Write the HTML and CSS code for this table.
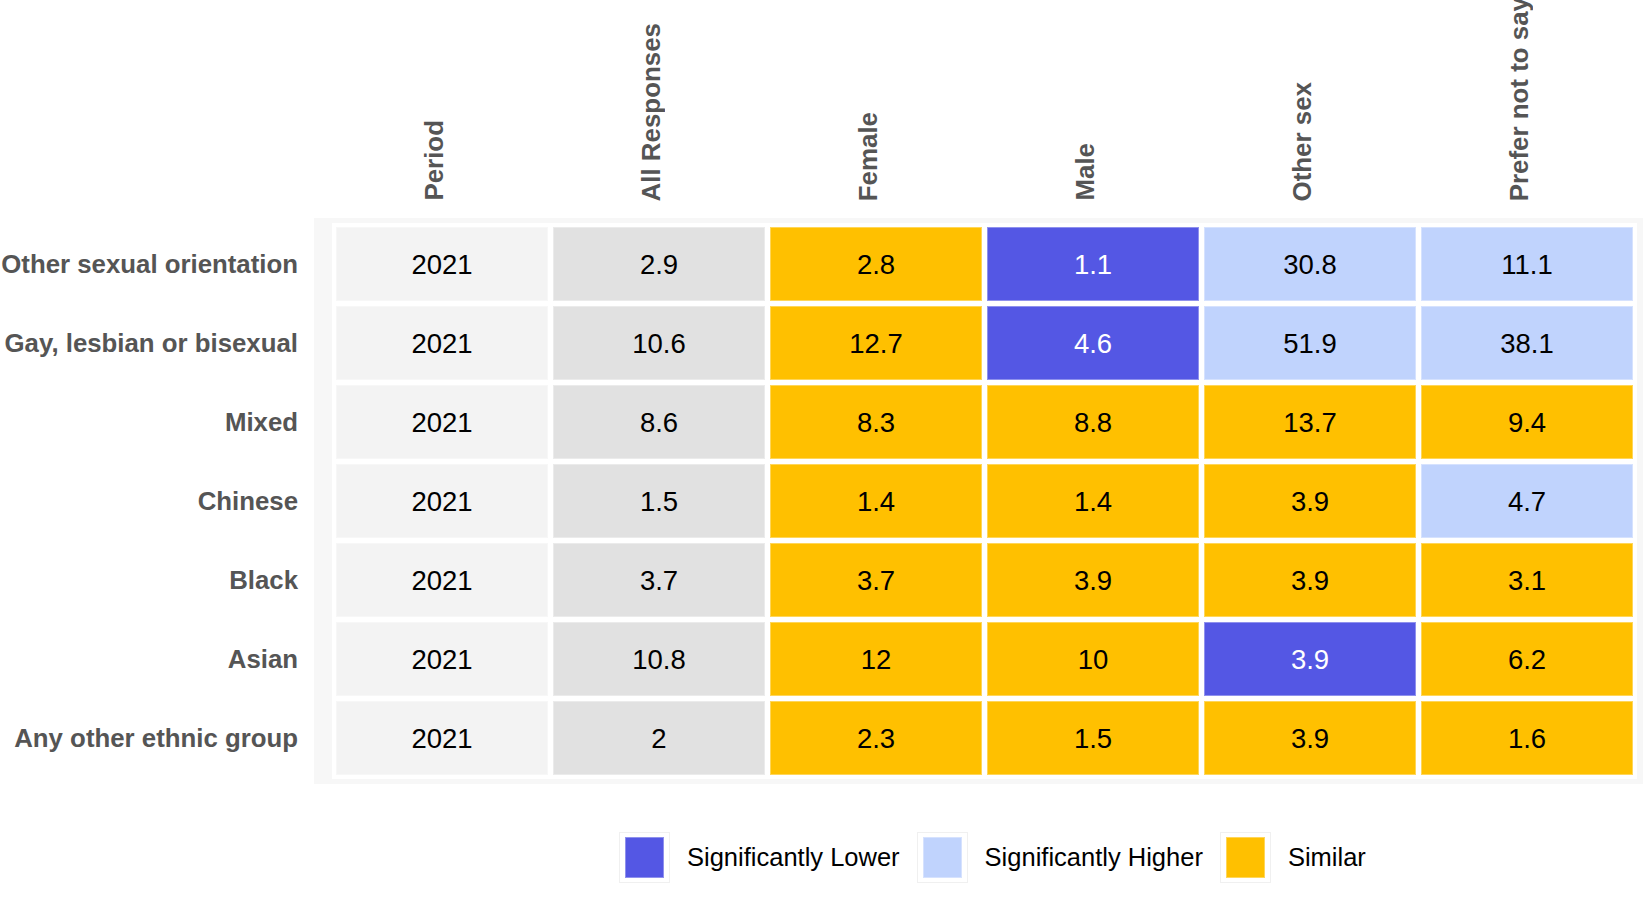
FILE: index.html
```html
<!DOCTYPE html>
<html lang="en">
<head>
<meta charset="utf-8">
<title>Comparison table</title>
<link rel="stylesheet" href="styles.css">
</head>
<body>
<div class="chart">
  <div class="head">
    <div class="hcell"><span class="htext">Period</span></div>
    <div class="hcell"><span class="htext">All Responses</span></div>
    <div class="hcell"><span class="htext">Female</span></div>
    <div class="hcell"><span class="htext">Male</span></div>
    <div class="hcell"><span class="htext">Other sex</span></div>
    <div class="hcell"><span class="htext">Prefer not to say</span></div>
  </div>
  <div class="body">
    <div class="labels">
      <div class="rlabel">Other sexual orientation</div>
      <div class="rlabel">Gay, lesbian or bisexual</div>
      <div class="rlabel">Mixed</div>
      <div class="rlabel">Chinese</div>
      <div class="rlabel">Black</div>
      <div class="rlabel">Asian</div>
      <div class="rlabel">Any other ethnic group</div>
    </div>
    <div class="panel">
      <div class="inner">
        <div class="cell period">2021</div><div class="cell all">2.9</div><div class="cell sim">2.8</div><div class="cell low">1.1</div><div class="cell high">30.8</div><div class="cell high">11.1</div>
        <div class="cell period">2021</div><div class="cell all">10.6</div><div class="cell sim">12.7</div><div class="cell low">4.6</div><div class="cell high">51.9</div><div class="cell high">38.1</div>
        <div class="cell period">2021</div><div class="cell all">8.6</div><div class="cell sim">8.3</div><div class="cell sim">8.8</div><div class="cell sim">13.7</div><div class="cell sim">9.4</div>
        <div class="cell period">2021</div><div class="cell all">1.5</div><div class="cell sim">1.4</div><div class="cell sim">1.4</div><div class="cell sim">3.9</div><div class="cell high">4.7</div>
        <div class="cell period">2021</div><div class="cell all">3.7</div><div class="cell sim">3.7</div><div class="cell sim">3.9</div><div class="cell sim">3.9</div><div class="cell sim">3.1</div>
        <div class="cell period">2021</div><div class="cell all">10.8</div><div class="cell sim">12</div><div class="cell sim">10</div><div class="cell low">3.9</div><div class="cell sim">6.2</div>
        <div class="cell period">2021</div><div class="cell all">2</div><div class="cell sim">2.3</div><div class="cell sim">1.5</div><div class="cell sim">3.9</div><div class="cell sim">1.6</div>
      </div>
    </div>
  </div>
  <div class="legend">
    <div class="swatch-box"><div class="swatch low"></div></div>
    <div class="ltext">Significantly Lower</div>
    <div class="swatch-box"><div class="swatch high"></div></div>
    <div class="ltext">Significantly Higher</div>
    <div class="swatch-box"><div class="swatch sim"></div></div>
    <div class="ltext">Similar</div>
  </div>
</div>
</body>
</html>
```
FILE: styles.css
```css
html, body {
  margin: 0;
  padding: 0;
  background: #ffffff;
  overflow: hidden;
  width: 1643px;
  height: 897px;
}

.chart {
  font-family: "Liberation Sans", Arial, sans-serif;
  width: 1643px;
}

.head {
  display: flex;
  gap: 5px;
  height: 201px;
  margin-left: 337px;
  margin-bottom: 17px;
}

.hcell {
  width: 212px;
  flex: none;
  height: 201px;
  display: flex;
  align-items: flex-end;
  justify-content: center;
}

.htext {
  writing-mode: vertical-rl;
  transform: rotate(180deg);
  font-size: 25.9px;
  font-weight: bold;
  color: #555555;
  line-height: 34px;
  white-space: nowrap;
  margin-right: 18px;
}

.body {
  display: flex;
  align-items: flex-start;
}

.labels {
  width: 298px;
  flex: none;
  margin-right: 16px;
  padding-top: 9px;
  display: flex;
  flex-direction: column;
  gap: 5px;
}

.rlabel {
  height: 74px;
  display: flex;
  align-items: center;
  justify-content: flex-end;
  font-size: 25.8px;
  font-weight: bold;
  color: #555555;
  white-space: nowrap;
}

.panel {
  flex: none;
  background: #f7f7f7;
  padding: 5px 18px 5px 18px;
}

.inner {
  background: #ffffff;
  padding: 4px;
  display: grid;
  grid-template-columns: repeat(6, 212px);
  grid-auto-rows: 74px;
  gap: 5px;
}

.cell {
  display: flex;
  align-items: center;
  justify-content: center;
  font-size: 27.5px;
  color: #000000;
  box-sizing: border-box;
  border: 1px solid rgba(255, 255, 255, 0.35);
  padding-top: 2px;
}

.cell.period { background: #f3f3f3; }
.cell.all { background: #e1e1e1; }
.sim { background: #ffc000; }
.low { background: #5457e4; color: #ffffff; }
.high { background: #c0d3fd; }

.legend {
  display: flex;
  align-items: center;
  gap: 17px;
  margin-left: 619px;
  margin-top: 48px;
}

.swatch-box {
  width: 51px;
  height: 51px;
  box-sizing: border-box;
  border: 1px solid #f0f0f0;
  padding: 5px;
  display: flex;
  align-items: center;
  justify-content: center;
}

.swatch {
  width: 39px;
  height: 41px;
  box-sizing: border-box;
  border: 1px solid rgba(255, 255, 255, 0.35);
}

.ltext {
  font-size: 25.5px;
  color: #000000;
  white-space: nowrap;
}
```
